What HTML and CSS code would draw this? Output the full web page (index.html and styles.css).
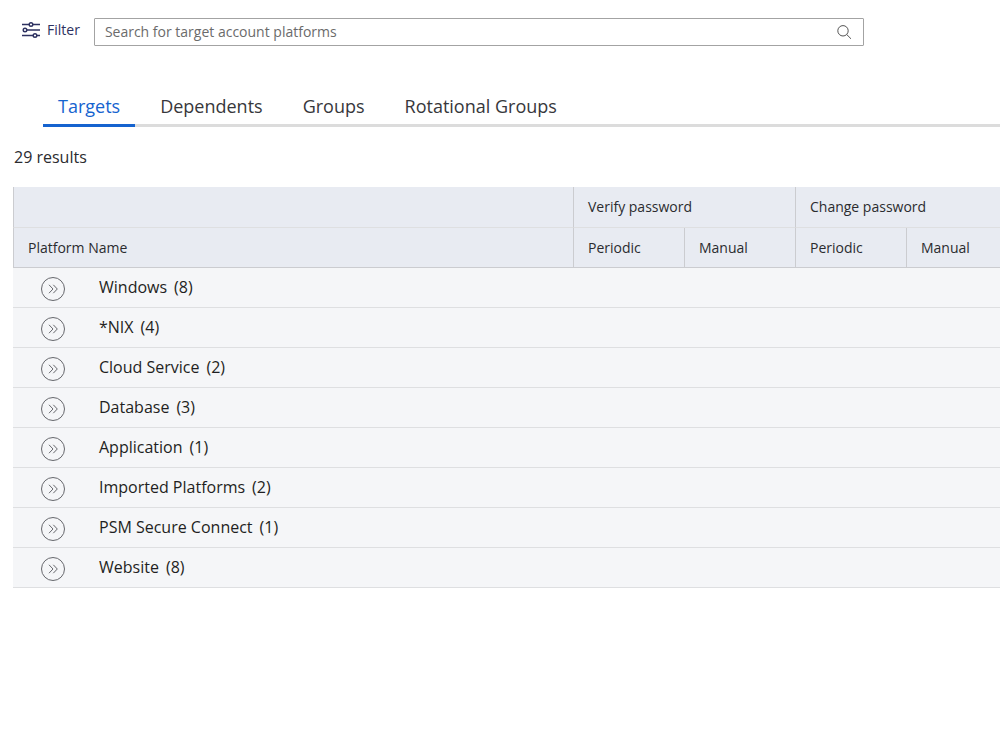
FILE: index.html
```html
<!DOCTYPE html>
<html lang="en">

<head>
    <meta charset="UTF-8">
    <meta name="viewport" content="width=device-width, initial-scale=1.0">
    <title>Platform Management</title>
    <link rel="stylesheet" href="styles.css">
</head>

<body>
    <!-- icons -->
    <svg class="icon-defs" aria-hidden="true">
        <symbol id="icon-expand" viewBox="0 0 24 24">
            <circle cx="12" cy="12" r="11.5" />
            <path d="M8 7.800l4 4.200-4 4.200M12.300 7.800l4 4.200-4 4.200" />
        </symbol>
    </svg>

    <header class="toolbar">
        <button type="button" class="filter-btn">
            <svg width="20" height="18" viewBox="0 0 20 18" aria-hidden="true">
                <path d="M1 3.500h7M12 3.500h7M6 9h13M1 14.500h11M16 14.500h3" />
                <circle cx="10" cy="3.500" r="1.800" />
                <circle cx="4" cy="9" r="1.800" />
                <circle cx="14" cy="14.500" r="1.800" />
            </svg>
            Filter
        </button>
        <form class="search">
            <input type="text" class="search-input" placeholder="Search for target account platforms"
                aria-label="Search for target account platforms">
            <button type="button" class="search-btn" aria-label="Search">
                <svg width="16" height="16" viewBox="0 0 16 16" aria-hidden="true">
                    <circle cx="7" cy="6.800" r="5.200" />
                    <path d="M10.700 10.500l4.300 4.300" />
                </svg>
            </button>
        </form>
    </header>

    <nav class="tabs">
        <a href="#targets" class="tab active">Targets</a>
        <a href="#dependents" class="tab">Dependents</a>
        <a href="#groups" class="tab">Groups</a>
        <a href="#rotational" class="tab">Rotational Groups</a>
    </nav>

    <main class="content">
        <p class="results">29 results</p>

        <table class="platforms">
            <colgroup>
                <col>
                <col class="col-action">
                <col class="col-action">
                <col class="col-action">
                <col class="col-last">
            </colgroup>
            <thead>
                <tr>
                    <td></td>
                    <th colspan="2">Verify password</th>
                    <th colspan="2">Change password</th>
                </tr>
                <tr>
                    <th>Platform Name</th>
                    <th>Periodic</th>
                    <th>Manual</th>
                    <th>Periodic</th>
                    <th>Manual</th>
                </tr>
            </thead>
            <tbody id="platformList"></tbody>
        </table>
    </main>

    <script>
        const platforms = [
            { name: "Windows", count: 8 },
            { name: "*NIX", count: 4 },
            { name: "Cloud Service", count: 2 },
            { name: "Database", count: 3 },
            { name: "Application", count: 1 },
            { name: "Imported Platforms", count: 2 },
            { name: "PSM Secure Connect", count: 1 },
            { name: "Website", count: 8 }
        ];

        const platformList = document.getElementById("platformList");

        platforms.forEach((platform) => {
            const row = document.createElement("tr");
            row.innerHTML = `
                <td colspan="5">
                    <div class="group">
                        <button type="button" class="expand-btn" aria-label="Expand ${platform.name}">
                            <svg width="24" height="24" aria-hidden="true"><use href="#icon-expand"></use></svg>
                        </button>
                        <span class="group-name"><span>${platform.name}</span><span>(${platform.count})</span></span>
                    </div>
                </td>
            `;
            platformList.appendChild(row);
        });
    </script>
</body>

</html>
```
FILE: styles.css
```css
* {
    box-sizing: border-box;
}

body {
    font-family: "Open Sans", sans-serif;
    font-size: 16px;
    color: #2b2b2f;
    background: #fff;
    margin: 0;
}

button,
input {
    font-family: inherit;
    font-size: 14px;
}

button {
    padding: 0;
    border: none;
    background: none;
    cursor: pointer;
}

svg {
    display: block;
    fill: none;
    stroke: currentColor;
}

.icon-defs {
    display: none;
}

/* Filter and search */
.toolbar {
    display: flex;
    align-items: flex-start;
    gap: 14px;
    padding: 18px 136px 0 21px;
}

.filter-btn {
    display: flex;
    align-items: center;
    gap: 6px;
    height: 24px;
    line-height: 24px;
    color: #2d3160;
}

.filter-btn svg {
    stroke-width: 1.4;
}

.search {
    display: flex;
    flex: 1;
    height: 28px;
    border: 1px solid #a3a3a3;
    border-radius: 1px;
}

.search-input {
    flex: 1;
    min-width: 0;
    padding: 0 10px 2px;
    border: none;
    color: #2b2b2f;
    background: transparent;
}

.search-input::placeholder {
    color: #6b6b6b;
    opacity: 1;
}

.search-btn {
    display: flex;
    align-items: center;
    padding: 0 11px;
    color: #555;
}

/* Tabs */
.tabs {
    display: flex;
    gap: 10px;
    margin: 42px 0 0 43px;
    border-bottom: 3px solid #dcdcdc;
}

.tab {
    margin-bottom: -3px;
    padding: 0 15px;
    border-bottom: 3px solid transparent;
    font-size: 18px;
    line-height: 36px;
    color: #37373b;
    text-decoration: none;
}

.tab.active {
    color: #1563cf;
    border-color: #1563cf;
}

/* Platforms table */
.content {
    padding: 18px 0 0 13px;
}

.results {
    margin: 0 0 18px;
    padding-left: 1px;
    line-height: 24px;
}

.platforms {
    width: 100%;
    table-layout: fixed;
    border-collapse: separate;
    border-spacing: 0;
}

.col-action {
    width: 111px;
}

.col-last {
    width: 94px;
}

.platforms td,
.platforms th {
    padding: 0;
    border-bottom: 1px solid #dedfe1;
}

.platforms thead td,
.platforms thead th {
    height: 41px;
    padding: 0 14px 2px;
    border-left: 1px solid #cbccd0;
    background: #e8ebf2;
    font-size: 14px;
    font-weight: normal;
    text-align: left;
}

.platforms thead tr:last-child th {
    height: 40px;
    padding-bottom: 0;
    border-bottom-color: #cbccd0;
}

.platforms tbody td {
    height: 40px;
    background: #f5f6f8;
}

.group {
    display: flex;
    align-items: flex-start;
    gap: 34px;
    padding-left: 28px;
}

.expand-btn {
    padding-top: 2px;
    color: #66676c;
}

.group-name {
    display: flex;
    gap: 7px;
    line-height: 24px;
    color: #1f1f22;
}
```
